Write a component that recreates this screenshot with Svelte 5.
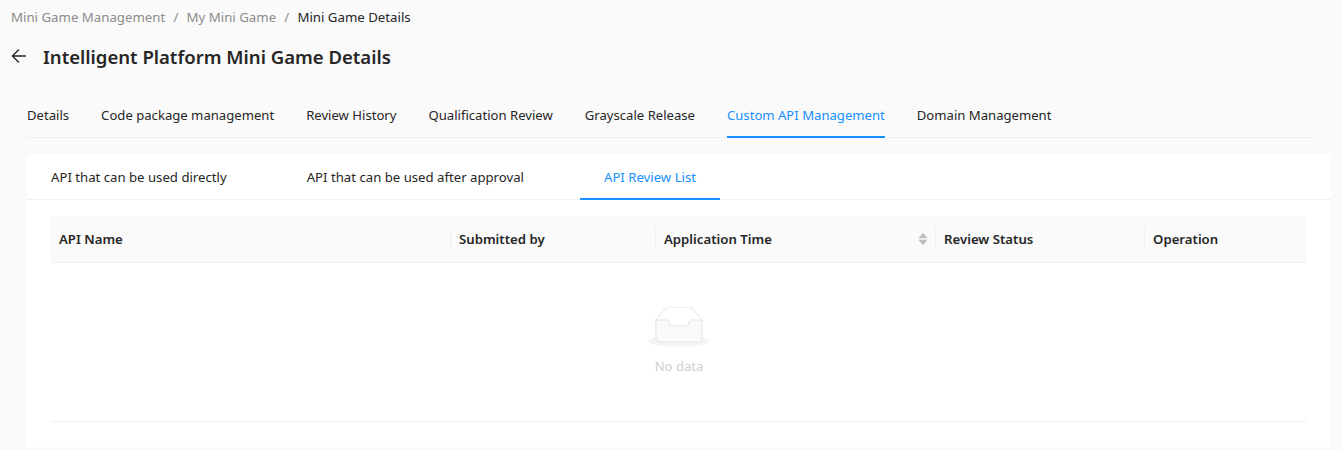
<script>
  const tabs = [
    "Details",
    "Code package management",
    "Review History",
    "Qualification Review",
    "Grayscale Release",
    "Custom API Management",
    "Domain Management",
  ];
  const subTabs = [
    "API that can be used directly",
    "API that can be used after approval",
    "API Review List",
  ];
  const columns = [
    { name: "API Name" },
    { name: "Submitted by" },
    { name: "Application Time", sortable: true },
    { name: "Review Status" },
    { name: "Operation" },
  ];
  let activeTab = 5;
  let activeSub = 2;
</script>

<div class="page">
  <nav class="crumbs">
    <span>Mini Game Management</span>
    <span class="sep">/</span>
    <span>My Mini Game</span>
    <span class="sep">/</span>
    <span class="current">Mini Game Details</span>
  </nav>

  <header class="title-row">
    <svg class="back" width="16" height="16" viewBox="0 0 16 16" fill="none" stroke="#262626" stroke-width="1.3">
      <path d="M1.6 8H15M7.9 1.5 1.4 8l6.5 6.5" />
    </svg>
    <h1>Intelligent Platform Mini Game Details</h1>
  </header>

  <div class="tabs">
    {#each tabs as tab, i}
      <button class="tab" class:active={i === activeTab} onclick={() => (activeTab = i)}>{tab}</button>
    {/each}
  </div>

  <section class="card">
    <div class="subtabs">
      {#each subTabs as tab, i}
        <button class="subtab" class:active={i === activeSub} onclick={() => (activeSub = i)}>{tab}</button>
      {/each}
    </div>

    <div class="table">
      <div class="thead">
        {#each columns as col}
          <div class="th">
            <span>{col.name}</span>
            {#if col.sortable}
              <svg class="sorter" width="10" height="14" viewBox="0 0 10 14" fill="#bfbfbf">
                <path d="M5 .8 9.6 6.2H.4zM5 13.2.4 7.8h9.2z" />
              </svg>
            {/if}
          </div>
        {/each}
      </div>
      <div class="empty">
        <svg width="64" height="41" viewBox="0 0 64 41">
          <ellipse cx="32" cy="34" rx="31" ry="6" fill="#f5f5f5" />
          <g fill-rule="nonzero" stroke="#e4e4e4" stroke-width="1">
            <path d="M55 12.76 44.85 1.26C44.36.5 43.65 0 42.9 0H21.1c-.75 0-1.46.5-1.95 1.26L9 12.76V22h46z" fill="none" />
            <path d="M41.6 15.93c0-1.6 1-2.93 2.24-2.93H55v18.14C55 33.26 53.68 35 52.05 35h-40.1C10.32 35 9 33.26 9 31.14V13h11.16c1.24 0 2.24 1.33 2.24 2.93 0 1.6 1.01 2.9 2.25 2.9h14.7c1.24 0 2.25-1.31 2.25-2.9z" fill="#fafafa" />
          </g>
        </svg>
        <p>No data</p>
      </div>
    </div>
  </section>
</div>

<style>
  :global(body) {
    margin: 0;
    background: #fafafa;
    font-family: "Noto Sans", "Open Sans", sans-serif;
    font-size: 14px;
    color: #262626;
  }

  .page {
    height: 450px;
    overflow: hidden;
    box-sizing: border-box;
    padding: 7px 11px 0;
  }

  .crumbs {
    display: flex;
    gap: 8.2px;
    height: 20px;
    line-height: 20px;
    font-size: 13.24px;
    color: #8c8c8c;
  }

  .crumbs .current {
    color: #262626;
  }

  .title-row {
    display: flex;
    align-items: center;
    gap: 16px;
    height: 32px;
    margin-top: 14px;
  }

  .back {
    flex: none;
    margin-top: -3px;
  }

  h1 {
    margin: 0;
    font-size: 18.55px;
    font-weight: 600;
    line-height: 32px;
  }

  .tabs {
    display: flex;
    gap: 32px;
    margin: 20px 15px 0 16px;
    height: 44px;
    border-bottom: 1px solid #f0f0f0;
  }

  button {
    appearance: none;
    border: 0;
    background: none;
    padding: 0;
    font: inherit;
    font-size: 13.11px;
    color: #262626;
    cursor: pointer;
  }

  .tab {
    height: 45px;
    border-bottom: 2px solid transparent;
  }

  .tab.active,
  .subtab.active {
    color: #1890ff;
    border-bottom-color: #1890ff;
  }

  .card {
    margin: 16px 0 0 16px;
    width: 1304px;
    height: 293px;
    background: #fff;
  }

  .subtabs {
    display: flex;
    height: 45px;
    border-bottom: 1px solid #f0f0f0;
  }

  .subtab {
    height: 46px;
    padding: 1px 24px 0;
    font-size: 13.18px;
    border-bottom: 2px solid transparent;
  }

  .subtab + .subtab {
    margin-left: 32px;
  }

  .table {
    margin: 16px 24px 0;
  }

  .thead {
    display: grid;
    grid-template-columns: 400px 205px 280px 209px 162px;
    height: 46px;
    background: #fafafa;
    border-bottom: 1px solid #f0f0f0;
  }

  .th {
    position: relative;
    display: flex;
    align-items: center;
    justify-content: space-between;
    padding: 0 8px;
    font-size: 13.2px;
    font-weight: 600;
  }

  .th + .th::before {
    content: "";
    position: absolute;
    left: -1px;
    top: 12px;
    height: 22px;
    width: 1px;
    background: #f0f0f0;
  }

  .sorter {
    margin-right: 0;
  }

  .empty {
    height: 159px;
    box-sizing: border-box;
    padding-top: 44px;
    border-bottom: 1px solid #f0f0f0;
    display: flex;
    flex-direction: column;
    align-items: center;
  }

  .empty p {
    margin: 8px 0 0;
    font-size: 13.1px;
    line-height: 20px;
    color: #d0d0d0;
  }
</style>
